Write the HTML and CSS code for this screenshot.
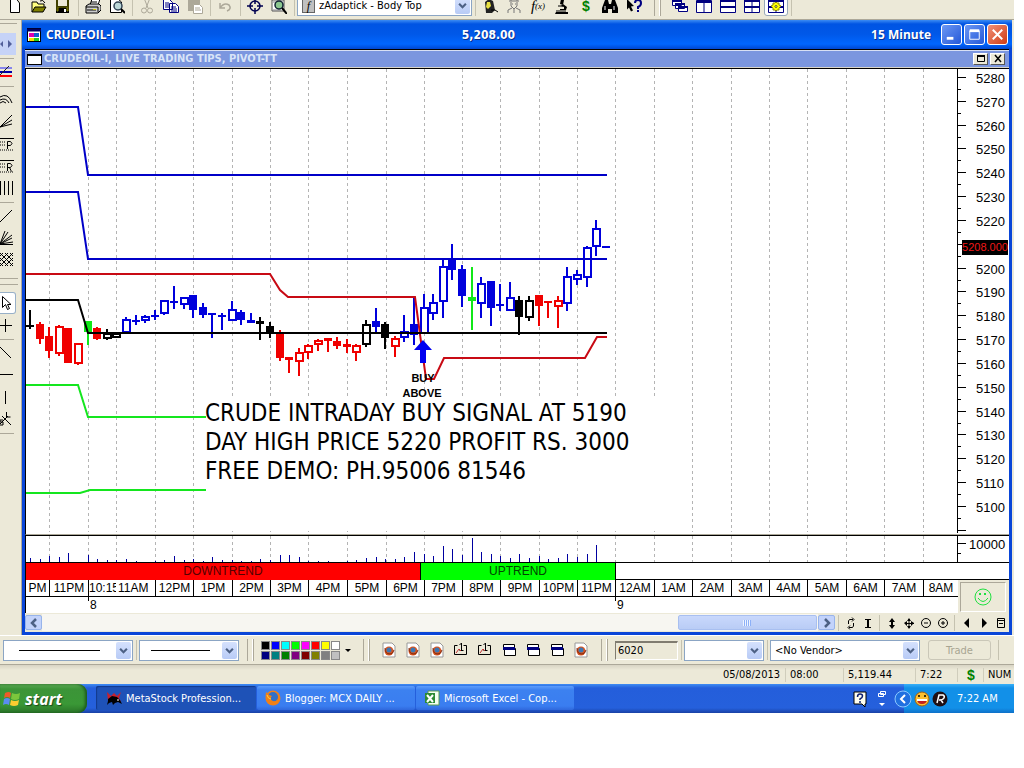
FILE: index.html
```
<!DOCTYPE html>
<html lang="en">
<head>
    <meta charset="UTF-8">
    <meta name="viewport" content="width=device-width, initial-scale=1.0">
    <title>CRUDEOIL-I</title>
    <link rel="stylesheet" href="styles.css">
</head>
<body>
    <!-- Shared icons -->
    <svg class="defs" width="0" height="0" aria-hidden="true">
        <symbol id="down" viewBox="0 0 16 20"><path d="M4 8l4 4 4-4" fill="none" stroke="#4d6185" stroke-width="2.5"/></symbol>
        <symbol id="fox" viewBox="0 0 16 16"><path d="M2 1h9l3 3v11H2z" fill="#fff" stroke="#999"/><circle cx="8" cy="9" r="4.500" fill="#d9541e"/><circle cx="8" cy="8" r="2.500" fill="#3c78b4"/><path d="M4 6q0 6 5 6 3 0 4-4" fill="none" stroke="#7c2b12"/></symbol>
        <symbol id="chartbox" viewBox="0 0 16 16"><path d="M4.500 3.500h-3v9h12v-9h-3M8.500 9V1l-2 2m0 5.500h4" fill="none" stroke="#000"/><path d="M3 11l3-4 2 2" fill="none" stroke="#c03030"/></symbol>
        <symbol id="wins" viewBox="0 0 16 16"><path d="M2.500 2.500h11v4h-11zM3.500 6.500h11v7h-11z" fill="#fff" stroke="#000"/><path d="M2 5h12v3H2z" fill="#000080"/></symbol>
    </svg>

    <div class="app">
        <!-- Main toolbar -->
        <header class="toolbar">
            <button title="New"><svg viewBox="0 0 16 16"><path d="M3.500 1v13.500h9V5l-3-4" fill="#fff" stroke="#000"/></svg></button>
            <button title="Open"><svg viewBox="0 0 16 16"><path d="M1 14V4h5l1 2h6v3" fill="#ffff80" stroke="#000"/><path d="M1 14l3-5h11l-3 5z" fill="#808000" stroke="#000"/><path d="M9 3q3-2 5 2" fill="none" stroke="#000"/></svg></button>
            <button title="Save"><svg viewBox="0 0 16 16"><path d="M1 1h13v14H1z" fill="#000"/><path d="M3 2h9v6H3z" fill="#ece9d8"/><path d="M2 2v11h1V9h9v4h1V2" fill="none" stroke="#808000"/><path d="M9 11h2v3H9z" fill="#fff"/></svg></button>
            <i class="sep"></i>
            <button title="Print"><svg viewBox="0 0 16 16"><path d="M5 7l2-6h8l-2 6" fill="#fff" stroke="#000"/><path d="M1 8l3-2h10l2 2v4l-3 3H1z" fill="#ccc" stroke="#000"/><path d="M1 9h12v5M2 12h9M6 4h6" fill="none" stroke="#000"/><path d="M8 11h3v1H8z" fill="#cc0"/></svg></button>
            <button title="Preview"><svg viewBox="0 0 16 16"><path d="M1.500 1v13.500h11V4L9 1" fill="#fff" stroke="#000"/><circle cx="9" cy="8" r="4" fill="#bcd8d8" stroke="#345" stroke-width="1.500"/><path d="M12 11l4 4" stroke="#000" stroke-width="2"/></svg></button>
            <i class="sep"></i>
            <button title="Cut" disabled><svg viewBox="0 0 16 16" fill="none" stroke="#aca899"><path d="M5 0l4 10M11 0L7 10"/><circle cx="5" cy="12.500" r="2.500"/><circle cx="11" cy="12.500" r="2.500"/></svg></button>
            <button title="Copy"><svg viewBox="0 0 16 16" fill="#fff" stroke="#000080"><path d="M.5 1.500h6l3 3v7h-9zM6.500 5.500h6l3 3v6h-9z"/><path d="M2 5h4M2 7h4M2 9h4M8 9h5M8 11h6M8 13h6"/></svg></button>
            <button title="Paste" disabled><svg viewBox="0 0 16 16"><path d="M1 2h12v11H1z" fill="#aca899"/><path d="M6.500 6.500h6l3 3v6h-9z" fill="#fff" stroke="#aca899"/><path d="M8 10h5M8 12h6" stroke="#aca899"/></svg></button>
            <i class="sep"></i>
            <button title="Undo" disabled><svg viewBox="0 0 16 16" fill="none" stroke="#aca899" stroke-width="1.500"><path d="M3 5v5h5M3 10q4-6 9-3 3 4-2 6"/></svg></button>
            <i class="sep"></i>
            <button title="Crosshair"><svg viewBox="0 0 16 16" fill="none" stroke="#000050" stroke-width="1.500"><circle cx="8" cy="8" r="5"/><path d="M8 0v6M8 10v6M0 8h6M10 8h6"/></svg></button>
            <button title="Find chart"><svg viewBox="0 0 16 16"><path d="M1 2h12v11H1z" fill="#fff" stroke="#555"/><path d="M2 4h10M2 12h8" stroke="#888"/><circle cx="8" cy="7" r="4" fill="#8cc890" stroke="#123" stroke-width="1.500"/><path d="M11 10l5 6" stroke="#000" stroke-width="2"/></svg></button>
            <i class="sep"></i>
            <div class="combo indicator">
                <span class="badge">f</span>
                <select aria-label="Indicator"><option>zAdaptick - Body Top</option></select>
                <svg class="arrow"><use href="#down"/></svg>
            </div>
            <i class="sep"></i>
            <button title="Expert"><svg viewBox="0 0 16 16"><path d="M3 4l4-3 4 2 2 9-3 3H4z" fill="#222"/><path d="M5 4h3l1 4-3 3-2-2z" fill="#e8e040"/><path d="M9 12h4l3 2" stroke="#000" fill="none"/></svg></button>
            <button title="Advisor"><svg viewBox="0 0 16 16" fill="none" stroke="#777"><path d="M3 3h10M5 3V1h6v2M5 4v4l3 3 3-3V4M2 15v-3l4-2M14 15v-3l-4-2M8 11v4M6 6h1M9 6h1"/></svg></button>
            <button title="Function" class="fx">f<sub>(x)</sub></button>
            <button title="Explorer"><svg viewBox="0 0 16 16"><path d="M7 1l3 1-1 5-3-1zM2 14h12v2H1zM9 6l4 3-1 3H6v-1h4V9L7 8z"/><path d="M4 8h5M2 13h10" stroke="#000"/></svg></button>
            <button title="System tester" class="dollar">$</button>
            <button title="Search"><svg viewBox="0 0 16 16"><path d="M3 2h3l1 4h2l1-4h3l3 8v5h-6v-4H6v4H0v-5z"/><path d="M3 8v4M12 8v4" stroke="#fff"/></svg></button>
            <button title="Help"><svg viewBox="0 0 16 16"><path d="M1 1l7 7-3 .5 2 4-2 1-2-4-2 2z"/><path d="M9 5q0-3 3-3t3 3-3 4v2M12 12v2" fill="none" stroke="#000080" stroke-width="2"/></svg></button>
            <i class="grip"></i>
            <button title="Cascade"><svg viewBox="0 0 16 16" fill="#fff" stroke="#000080"><path d="M.5 2.500h9v5h-9zM3.500 5.500h9v5h-9zM6.500 8.500h9v5h-9z"/><path d="M0 3h10M3 6h10M6 9h10" stroke-width="2"/></svg></button>
            <button title="Columns"><svg viewBox="0 0 16 16" fill="#fff" stroke="#000080"><path d="M.5 2.500h15v12H.5zM8 2v12"/><path d="M0 4h16" stroke-width="2"/></svg></button>
            <button title="Rows"><svg viewBox="0 0 16 16" fill="#fff" stroke="#000080"><path d="M.5 2.500h15v12H.5z"/><path d="M0 3h16M0 9h16" stroke-width="2"/></svg></button>
            <button title="Tile"><svg viewBox="0 0 16 16" fill="#fff" stroke="#000080"><path d="M.5 2.500h15v12H.5zM8 2v12"/><path d="M0 3h16M0 9h16" stroke-width="2"/></svg></button>
            <button title="Layout" class="checked"><svg viewBox="0 0 16 16" fill="#fff" stroke="#000080"><path d="M.5 2.500h15v12H.5zM8 2v12"/><path d="M0 3h16M0 9h16" stroke-width="2"/><path d="M8 4l1 1 2 0 0 2 2 1-2 2 0 2-2 0-1 1-1-1-2 0 0-2-2-2 2-1 0-2 2 0z" fill="#ff0" stroke="#880"/><circle cx="8" cy="8.500" r="1" stroke="#550"/></svg></button>
            <i class="sep"></i>
        </header>

        <div class="workspace">
            <!-- Drawing tools -->
            <aside class="tools">
                <button title="Scroll" class="soft"><svg viewBox="0 0 14 16"><path d="M3 5v6L0 8zM8 4l4 4-4 4z" fill="#52609a"/></svg></button>
                <i></i>
                <button title="Regression"><svg viewBox="0 0 14 16"><path d="M0 4h12" stroke="#2020ff"/><path d="M0 8h12" stroke="#00a" stroke-width="2"/><path d="M0 12h12" stroke="red" stroke-width="2"/><path d="M0 11l9-9" stroke="#222"/></svg></button>
                <i></i>
                <button title="Arcs"><svg viewBox="0 0 14 16" fill="none" stroke="#000"><path d="M0 5q8-5 12 6M0 8q6-3 9 3M0 11q3-3 6 0"/></svg></button>
                <button title="Fan"><svg viewBox="0 0 14 16" stroke="#000"><path d="M0 13L12 1M0 13l12-7M0 13l12-3"/></svg></button>
                <button title="Projection"><svg viewBox="0 0 14 16" stroke="#000" fill="none"><path d="M0 2.500h14"/><path d="M0 6h5M0 9h5M0 14h14" stroke-dasharray="1 1"/><path d="M7.500 13V5.500h3q3 2 0 4h-3"/></svg></button>
                <button title="Retracement"><svg viewBox="0 0 14 16" stroke="#000" fill="none"><path d="M0 2.500h14"/><path d="M0 6h5M0 9h5M0 14h14" stroke-dasharray="1 1"/><path d="M7.500 13V5.500h3q3 2 0 4h-3m2 0l2 4"/></svg></button>
                <button title="Time zones"><svg viewBox="0 0 14 16" stroke="#000"><path d="M.5 1v14M4.500 1v14M8.500 1v14M12.500 1v14"/></svg></button>
                <i></i>
                <button title="Gann line"><svg viewBox="0 0 14 16" stroke="#000"><path d="M0 14L12 2"/></svg></button>
                <button title="Gann fan"><svg viewBox="0 0 14 16" stroke="#000"><path d="M0 14L5 1M0 14l8-12M0 14l12-9M0 14l12-6M0 14l13-2M0 14.500h13"/></svg></button>
                <button title="Gann grid"><svg viewBox="0 0 14 16" stroke="#000" fill="none"><path d="M0 1l13 13M0 6l8 8M5 1l8 8M0 11l3 3M10 1l3 3M13 1L0 14M8 1L0 9M13 6l-8 8M3 1L0 4M13 11l-3 3"/></svg></button>
                <i class="wide"></i>
                <button title="Pointer" class="checked"><svg viewBox="0 0 14 16"><path d="M2.500 1.500v11l3-3 2 5 2-1-2-4h3.500z" fill="#fff" stroke="#000"/></svg></button>
                <button title="Cross"><svg viewBox="0 0 14 16" stroke="#000"><path d="M0 8.500h12M5.500 2v13"/></svg></button>
                <i></i>
                <button title="Trendline"><svg viewBox="0 0 14 16" stroke="#000"><path d="M0 2l11 11"/></svg></button>
                <button title="Horizontal line"><svg viewBox="0 0 14 16" stroke="#000"><path d="M0 7.500h13"/></svg></button>
                <button title="Vertical line"><svg viewBox="0 0 14 16" stroke="#000"><path d="M5.500 2v13"/></svg></button>
                <button title="Speed lines"><svg viewBox="0 0 14 16" stroke="#000" fill="none"><path d="M2 5l9 9M0 13L8 5M6.500 1v5h4M3 9H0v2h3v3H0"/></svg></button>
                <i></i>
            </aside>

            <!-- Chart window -->
            <main class="window">
                <div class="titlebar">
                    <svg viewBox="0 0 14 14"><path d="M0 0h14v14H0z" fill="#fff" stroke="#000" stroke-width="2"/><path d="M2 5h5v4H2z" fill="#e000b0"/><path d="M7 5h5v4H7z" fill="#1060d0"/><path d="M2 10h5v3H2z" fill="#f8e000"/><path d="M7 10h5v3H7z" fill="#20d020"/><path d="M0 2h14" stroke="#000060" stroke-width="3"/></svg>
                    <h1>CRUDEOIL-I</h1>
                    <span class="price">5,208.00</span>
                    <span class="period">15 Minute</span>
                    <button title="Minimize"><svg viewBox="0 0 20 20"><path d="M5 14h7" stroke="#fff" stroke-width="3"/></svg></button>
                    <button title="Maximize"><svg viewBox="0 0 20 20"><path d="M5 6h10v9H5z" fill="none" stroke="#fff"/><path d="M5 6h10" stroke="#fff" stroke-width="3"/></svg></button>
                    <button title="Close" class="close"><svg viewBox="0 0 20 20"><path d="M5 5l10 10M15 5L5 15" stroke="#fff" stroke-width="2"/></svg></button>
                </div>
                <div class="subbar">
                    <i></i>
                    <h2>CRUDEOIL-I, LIVE TRADING TIPS, PIVOT-TT</h2>
                    <button title="Maximize pane"><svg viewBox="0 0 12 10"><path d="M2.500 1.500h7v6h-7z" fill="none" stroke="#000"/><path d="M2 2h8" stroke="#000" stroke-width="2"/></svg></button>
                    <button title="Close pane"><svg viewBox="0 0 12 10"><path d="M3 1l6 7M9 1L3 8" stroke="#000" stroke-width="1.500"/></svg></button>
                </div>

                <div class="plot">
                    <svg id="chart" viewBox="26 69 983 465">
                        <g id="grid" class="grid"></g>
                        <rect x="206" y="398" width="470" height="132" fill="#fff"/>
                        <g id="candles"></g>
                        <g class="levels">
                            <path d="M26 107H78L88 175H607M26 192H78L88 259H607" stroke="#0000c8"/>
                            <path d="M26 274H270L280 290L288 297H415L426 379H434L444 358H585L597 337H607" stroke="#c80a14"/>
                            <path d="M26 300H78L88 333H607" stroke="#000"/>
                            <path d="M26 385H78L88 417H206M26 493H80L90 490H206" stroke="#14e61e"/>
                        </g>
                        <path d="M423 340l9 10h-6v13h-6v-13h-6z" fill="#0000f0"/>
                        <text class="signal" x="423" y="382">BUY</text>
                        <text class="signal" x="422" y="397">ABOVE</text>
                        <g id="prices" class="axis"></g>
                        <rect x="962" y="240" width="46" height="15"/>
                        <text class="last" x="985" y="251">5208.000</text>
                    </svg>
                    <p class="note">CRUDE INTRADAY BUY SIGNAL AT 5190<br>DAY HIGH PRICE 5220 PROFIT RS. 3000<br>FREE DEMO: PH.95006 81546</p>
                </div>

                <div class="volume">
                    <svg viewBox="26 536 983 26">
                        <g id="vgrid" class="grid"></g>
                        <g id="volume"></g>
                        <g class="axis">
                            <path d="M957.5 536v26M958 543.5h8M958 553.500h3"/>
                            <text x="969" y="549">10000</text>
                        </g>
                    </svg>
                </div>

                <div class="trend">
                    <span class="downtrend">DOWNTREND</span>
                    <span class="uptrend">UPTREND</span>
                </div>

                <div class="timeline">
                    <div class="times">
                        <div class="hours">
                            <span>PM</span><span>11PM</span><span>10:15</span><span class="joined">11AM</span><span>12PM</span><span>1PM</span><span>2PM</span><span>3PM</span><span>4PM</span><span>5PM</span><span>6PM</span><span>7PM</span><span>8PM</span><span>9PM</span><span>10PM</span><span>11PM</span><span>12AM</span><span>1AM</span><span>2AM</span><span>3AM</span><span>4AM</span><span>5AM</span><span>6AM</span><span>7AM</span><span>8AM</span>
                        </div>
                        <div class="days"><span></span><span>8</span><span>9</span></div>
                    </div>
                    <div class="mood">
                        <svg viewBox="0 0 20 20" fill="none" stroke="#20e040"><circle cx="10" cy="10" r="8"/><path d="M5 11q5 7 10 0"/><path d="M7 6v2M12 6v2" stroke-width="2"/></svg>
                    </div>
                </div>

                <div class="scroll">
                    <button title="Scroll left" class="xp"><svg viewBox="0 0 16 16"><path d="M10 4L6 8l4 4" fill="none" stroke="#4d6185" stroke-width="2.500"/></svg></button>
                    <div class="track"><div class="thumb"><i></i></div></div>
                    <button title="Scroll right" class="xp"><svg viewBox="0 0 16 16"><path d="M6 4l4 4-4 4" fill="none" stroke="#4d6185" stroke-width="2.500"/></svg></button>
                    <i class="line"></i>
                    <button title="Refresh"><svg viewBox="0 0 16 16" fill="none" stroke="#000"><path d="M10 4.500H6.500L5.500 6v3M6 12.500h3.500l1-1.500V8M9 2.500l2 2-2 2M7 10.500l-2 2 2 2"/></svg></button>
                    <button title="Bar width"><svg viewBox="0 0 16 16" stroke="#000"><path d="M5 4.500h6M5 12.500h6"/><path d="M8 4v9" stroke-width="2"/></svg></button>
                    <i class="line"></i>
                    <button title="Rescale"><svg viewBox="0 0 16 16"><path d="M8 3l3 4H9v3h2l-3 4-3-4h2V7H5z"/></svg></button>
                    <button title="Move"><svg viewBox="0 0 16 16"><path d="M8 3l2 3H6zM8 14l2-3H6zM3 8l3-2v5zM13 8l-3-2v5z"/><path d="M8 4v9M4 8.500h9" stroke="#000"/></svg></button>
                    <button title="Zoom out"><svg viewBox="0 0 16 16" fill="none" stroke="#000"><circle cx="8" cy="8" r="4.500"/><path d="M6 8h4"/></svg></button>
                    <button title="Zoom in"><svg viewBox="0 0 16 16" fill="none" stroke="#000"><circle cx="8" cy="8" r="4.500"/><path d="M6 8h4M8 6v4"/></svg></button>
                    <i class="line"></i>
                    <button title="Previous"><svg viewBox="0 0 16 16"><path d="M10 3v10L5 8z"/></svg></button>
                    <button title="Next"><svg viewBox="0 0 16 16"><path d="M6 3v10l5-5z"/></svg></button>
                    <button title="Properties"><svg viewBox="0 0 16 16" fill="none" stroke="#000"><path d="M4.500 3.500h7v9h-7zM4 5.500h8M6 8.500h4"/></svg></button>
                </div>
            </main>
        </div>

        <!-- Format bar -->
        <div class="formatbar">
            <div class="combo linestyle"><select aria-label="Line style"><option></option></select><hr><svg class="arrow"><use href="#down"/></svg></div>
            <i class="sep"></i>
            <div class="combo lineweight"><select aria-label="Line weight"><option></option></select><hr><svg class="arrow"><use href="#down"/></svg></div>
            <i class="grip"></i>
            <div class="palette" id="palette"></div>
            <button title="More colors" class="more"><svg viewBox="0 0 8 8"><path d="M1 3h6L4 6z"/></svg></button>
            <i class="grip"></i>
            <div class="links">
                <button title="Link 1"><svg><use href="#fox"/></svg></button>
                <button title="Link 2"><svg><use href="#fox"/></svg></button>
                <button title="Link 3"><svg><use href="#fox"/></svg></button>
                <button title="Chart 1"><svg><use href="#chartbox"/></svg></button>
                <button title="Chart 2"><svg><use href="#chartbox"/></svg></button>
                <button title="Window 1"><svg><use href="#wins"/></svg></button>
                <button title="Window 2"><svg><use href="#wins"/></svg></button>
                <button title="Window 3"><svg><use href="#wins"/></svg></button>
                <button title="Link 4"><svg><use href="#fox"/></svg></button>
            </div>
            <i class="grip"></i>
            <input class="code" type="text" value="6020" aria-label="Code">
            <i class="sep"></i>
            <div class="combo account"><select aria-label="Account"><option></option></select><svg class="arrow"><use href="#down"/></svg></div>
            <i class="sep"></i>
            <div class="combo vendor"><select aria-label="Vendor"><option>&lt;No Vendor&gt;</option></select><svg class="arrow"><use href="#down"/></svg></div>
            <button class="trade" disabled>Trade</button>
            <i class="sep"></i>
        </div>

        <!-- Status bar -->
        <div class="statusbar">
            <span class="date">05/08/2013</span>
            <span class="open">08:00</span>
            <span class="value">5,119.44</span>
            <span class="clock">7:22</span>
            <span class="dollar">$</span>
            <span class="num">NUM</span>
        </div>

        <!-- Taskbar -->
        <footer class="taskbar">
            <button class="start">
                <svg viewBox="0 0 18 18"><path d="M2 3q4-2 6 0L7 8Q4 6 1 8z" fill="#f05a28"/><path d="M9 3q4 2 8 0l-1 6q-4 2-8 0z" fill="#7cc63c"/><path d="M1 9q3-2 6 0l-1 6q-3-2-6 0z" fill="#5a8cf0"/><path d="M8 10q4 2 8 0l-1 5q-4 2-8 0z" fill="#fccc30"/></svg>
                start
            </button>
            <button class="task active">
                <svg viewBox="0 0 16 16"><path d="M1 2l4 4 3-3 3 3 4-4-2 6 2 4-5-2-4 2-4-1z" fill="#c8202c"/><path d="M2 9l4-3 5 1 3 3 2 4-4-2-3 1-2 2-1-3-3 1-2 2 1-4z"/><path d="M11 10h2" stroke="#fff"/></svg>
                <span>MetaStock Profession...</span>
            </button>
            <button class="task">
                <svg viewBox="0 0 16 16"><circle cx="8" cy="8" r="7.500" fill="#f08018"/><circle cx="8" cy="7" r="5" fill="#3070c8"/><path d="M1 2q-2 13 7 13 6 0 7-8-3 5-7 4-4-2-1-5Q3 5 1 2z" fill="#f08018"/><path d="M2 5q1 4 4 4" stroke="#ffd040" fill="none"/></svg>
                <span>Blogger: MCX DAILY ...</span>
            </button>
            <button class="task">
                <svg viewBox="0 0 16 16"><path d="M4 1h11v14H4z" fill="#f4fff0" stroke="#5a9a50"/><path d="M1 3h10v10H1z" fill="#2c8a34"/><path d="M3 5l6 7M9 5l-6 7" stroke="#fff" stroke-width="2"/></svg>
                <span>Microsoft Excel - Cop...</span>
            </button>
            <div class="notify">
                <svg viewBox="0 0 16 16"><path d="M2 1h12v12h-1v3l-3-3H2z" fill="#fffff0" stroke="#000"/><path d="M5.500 6q0-3 2.500-3t2.500 2-2.500 3v1M8 10v2" fill="none" stroke="#102070" stroke-width="1.500"/></svg>
                <svg class="restore" viewBox="0 0 12 18"><path d="M4.500 1.500h5v3h-5zM2.500 3.500h5v3h-5z" fill="none" stroke="#fff"/><path d="M3 13h6l-3 3z" fill="#fff"/></svg>
            </div>
            <div class="tray">
                <button title="Hide icons"><svg viewBox="0 0 18 18"><circle cx="9" cy="9" r="8" fill="#2070e0" stroke="#8cc8ff"/><path d="M11 5L7 9l4 4" fill="none" stroke="#fff" stroke-width="2"/></svg></button>
                <svg viewBox="0 0 16 16"><circle cx="8" cy="8" r="7" fill="#fcc030" stroke="#a06010"/><path d="M3 8h10q0 5-5 5T3 8z" fill="#c02020"/><path d="M3 8h10v2H3z" fill="#fff"/><path d="M5 4v2M11 4v2" stroke="#000" stroke-width="1.500"/></svg>
                <svg viewBox="0 0 16 16"><circle cx="8" cy="8" r="7.500" fill="#201014"/><path d="M5 12L7 4h4q2 1 1 3-1 2-5 2M9 9l2 3" fill="none" stroke="#fff" stroke-width="1.500"/></svg>
                <time>7:22 AM</time>
            </div>
        </footer>
    </div>

    <script>
        const BLUE = '#0000dc', RED = '#f00000', BLACK = '#000', GREEN = '#10e818';

        // x, high, low, body top, body bottom, color, 1 = hollow
        const candles = [
            [30, 310, 329, 325, 327, BLACK, 0], [40, 322, 344, 324, 339, RED, 0], [49, 327, 358, 336, 351, RED, 0],
            [59, 325, 356, 327, 353, RED, 1], [68, 328, 363, 328, 363, RED, 0], [78, 343, 365, 344, 363, RED, 1],
            [88, 321, 345, 321, 332, GREEN, 0], [97, 327, 340, 328, 339, RED, 0], [107, 329, 340, 334, 338, BLACK, 1],
            [116, 333, 338, 334, 337, BLACK, 1], [126, 317, 333, 320, 332, BLUE, 1], [136, 315, 325, 320, 322, BLUE, 0],
            [145, 315, 323, 317, 320, BLUE, 1], [155, 310, 320, 315, 317, BLUE, 0], [164, 300, 315, 301, 313, BLUE, 1],
            [174, 286, 309, 301, 303, BLUE, 0], [184, 297, 309, 298, 304, BLUE, 1], [193, 295, 318, 295, 310, BLUE, 0],
            [203, 303, 318, 307, 315, BLUE, 0], [212, 313, 338, 313, 315, BLUE, 0], [222, 313, 330, 315, 317, BLUE, 0],
            [232, 301, 321, 310, 320, BLUE, 1], [241, 310, 325, 312, 320, BLUE, 0], [251, 313, 323, 320, 323, BLUE, 0],
            [260, 317, 340, 321, 324, BLACK, 0], [270, 322, 338, 326, 333, BLACK, 0], [280, 330, 361, 332, 358, RED, 0],
            [289, 357, 373, 357, 360, RED, 0], [299, 348, 376, 353, 361, RED, 1], [308, 344, 359, 346, 352, RED, 1],
            [318, 339, 351, 341, 344, RED, 1], [328, 338, 352, 338, 341, RED, 0], [337, 337, 349, 341, 346, RED, 0],
            [347, 339, 353, 344, 347, RED, 0], [356, 344, 361, 346, 352, RED, 1], [366, 320, 347, 325, 344, BLACK, 1],
            [376, 308, 334, 321, 327, BLUE, 0], [385, 322, 349, 324, 338, BLACK, 0], [395, 336, 357, 339, 346, RED, 1],
            [404, 315, 342, 332, 337, BLUE, 1], [414, 297, 345, 324, 335, BLUE, 0], [424, 294, 334, 308, 333, BLUE, 1],
            [433, 294, 320, 303, 313, BLUE, 1], [443, 259, 318, 267, 301, BLUE, 1], [452, 244, 280, 258, 270, BLUE, 0],
            [462, 265, 307, 269, 296, BLUE, 0], [472, 267, 330, 297, 301, GREEN, 0], [481, 277, 318, 284, 303, BLUE, 1],
            [491, 281, 326, 281, 308, BLUE, 0], [500, 284, 311, 304, 306, BLUE, 0], [510, 282, 311, 298, 310, BLUE, 1],
            [519, 296, 335, 300, 317, BLACK, 0], [529, 296, 321, 301, 317, BLACK, 1], [539, 295, 326, 295, 306, RED, 0],
            [548, 301, 318, 301, 303, RED, 0], [558, 296, 328, 301, 306, RED, 1], [567, 267, 311, 277, 303, BLUE, 1],
            [577, 270, 285, 275, 279, BLUE, 1], [587, 246, 287, 248, 277, BLUE, 1], [596, 220, 256, 229, 246, BLUE, 1],
            [606, 246, 248, 246, 248, BLUE, 0]
        ];

        // Bar heights, one per candle
        const volumes = [4, 3, 6, 5, 9, 0, 7, 3, 2, 2, 3, 1, 0, 1, 2, 6, 2, 3, 1, 5, 2, 2, 1, 1, 3, 2, 7, 7, 5, 1, 1, 1, 0, 1, 2, 4, 5, 3, 3, 5, 10, 8, 6, 16, 13, 7, 24, 10, 8, 6, 4, 8, 4, 6, 3, 4, 8, 5, 8, 17, 0];

        const hours = [49, 88, 116, 155, 193, 232, 270, 308, 347, 386, 424, 462, 500, 539, 577, 615, 654, 692, 731, 769, 807, 846, 884, 923];

        function gridLines(top, bottom) {
            return hours.map(x => `<path d="M${x + 0.5} ${top}V${bottom}"/>`).join('');
        }
        document.getElementById('grid').innerHTML = gridLines(69, 532);
        document.getElementById('vgrid').innerHTML = gridLines(536, 562);

        document.getElementById('candles').innerHTML = candles.map(([x, high, low, top, bottom, color, hollow]) => {
            const wick = `<path d="M${x} ${high}V${low}" stroke="${color}" stroke-width="2"/>`;
            const body = hollow
                ? `<rect x="${x - 3}" y="${top}" width="7" height="${bottom - top}" fill="#fff" stroke="${color}" stroke-width="2"/>`
                : `<rect x="${x - 4}" y="${top}" width="8" height="${bottom - top}" fill="${color}"/>`;
            return wick + body;
        }).join('');

        document.getElementById('volume').innerHTML = candles.map((c, i) =>
            `<rect x="${c[0]}" y="${562 - volumes[i]}" width="1" height="${volumes[i]}" fill="#0000a0"/>`).join('');

        // Price axis, the last price tag takes the place of the 5210 label
        let axis = '<path d="M957.5 69V533"/>';
        for (let price = 5280; price >= 5090; price -= 5) {
            const y = Math.round(77 + (5280 - price) * 2.383) + 0.5;
            const major = price % 10 === 0;
            axis += `<path d="M958 ${y}h${major ? 8 : 3}"/>`;
            if (major && price > 5090 && price !== 5210) {
                axis += `<text x="976" y="${y + 5}">${price}</text>`;
            }
        }
        document.getElementById('prices').innerHTML = axis;

        // Color palette
        const colors = ['#000', '#00f', '#0ff', '#0f0', '#f0f', '#f00', '#ff0', '#fff', '#000080', '#008080', '#008000', '#800080', '#800000', '#808000', '#808080', '#c0c0c0'];
        document.getElementById('palette').innerHTML = colors.map(c =>
            `<button title="${c}" style="background:${c}"></button>`).join('');
    </script>
</body>
</html>
```
FILE: styles.css
```
* {
    box-sizing: border-box;
}

body {
    margin: 0;
    background: #fff;
    color: #000;
    font-family: "DejaVu Sans Condensed", "DejaVu Sans", sans-serif;
    font-size: 11px;
}

button, select, input {
    font: inherit;
    color: inherit;
    margin: 0;
    padding: 0;
}

button {
    display: flex;
    align-items: center;
    justify-content: center;
    flex: none;
    background: none;
    border: 0;
}

svg {
    display: block;
    flex: none;
}

.defs {
    position: absolute;
}

.app {
    margin-right: 10px;
    background: #ece9d8;
}

/* Main toolbar */
.toolbar {
    display: flex;
    align-items: flex-end;
    height: 19px;
    padding: 0 0 3px 3px;
    overflow: hidden;
}

.toolbar button {
    width: 24px;
    height: 20px;
}

.toolbar button svg {
    width: 16px;
    height: 16px;
}

.toolbar .checked {
    background: #fff;
    border: 1px solid #98a8b8;
    border-radius: 3px;
}

.sep {
    flex: none;
    width: 6px;
    height: 20px;
    background: linear-gradient(#c5c2b0, #c5c2b0) center / 1px 100% no-repeat;
}

.grip {
    flex: none;
    width: 22px;
    height: 22px;
    background: linear-gradient(90deg, #aca899 1px, #ece9d8 1px, #ece9d8 5px, #fff 5px, #fff 6px, #aca899 6px) center / 7px 100% no-repeat;
}

.dollar {
    color: #008000;
    font-family: "Liberation Sans", sans-serif;
    font-size: 14px;
    font-weight: bold;
}

.fx {
    font-family: "Liberation Serif", serif;
    font-size: 15px;
    font-style: italic;
}

.fx sub {
    font-size: 9px;
}

/* Drop-downs */
.combo {
    position: relative;
    display: flex;
    align-items: center;
    flex: none;
    height: 21px;
    background: #fff;
    border: 1px solid #8ba5c4;
}

.combo select {
    flex: 1;
    width: 100%;
    height: 100%;
    padding-left: 4px;
    appearance: none;
    background: none;
    border: 0;
}

.combo .arrow {
    position: absolute;
    top: 1px;
    right: 1px;
    width: 15px;
    height: 17px;
    background: linear-gradient(#d5e1fd, #b8cbf6);
    border-radius: 2px;
    pointer-events: none;
}

.combo hr {
    position: absolute;
    left: 15px;
    right: 32px;
    margin: 0;
    border: 0;
    border-top: 1px solid #000;
    pointer-events: none;
}

.indicator {
    width: 175px;
}

.badge {
    width: 13px;
    height: 14px;
    margin-left: 4px;
    background: #c0c0c0;
    border: 1px solid #666;
    font: italic 12px/12px "Liberation Serif", serif;
    text-align: center;
}

/* Drawing tools */
.workspace {
    display: flex;
    border-top: 1px solid #aca899;
    padding-right: 2px;
}

.tools {
    display: flex;
    flex-direction: column;
    flex: none;
    width: 22px;
    padding-top: 13px;
    background: linear-gradient(#aca899, #aca899) 0 3px / 17px 1px no-repeat;
    border-right: 1px solid #aca899;
}

.tools button {
    width: 16px;
    height: 22px;
    justify-content: flex-start;
}

.tools button svg {
    width: 14px;
    height: 16px;
}

.tools .soft {
    background: #c6d3f7;
}

.tools .checked {
    background: #fff;
    border: 1px solid #98b0c8;
    border-left: 0;
    border-radius: 0 3px 3px 0;
}

.tools i {
    height: 6px;
    width: 14px;
    background: linear-gradient(#aca899, #aca899) center / 100% 1px no-repeat;
}

.tools .wide {
    height: 21px;
    width: 18px;
    background: linear-gradient(#aca899 1px, #ece9d8 1px, #ece9d8 6px, #aca899 6px) center / 100% 7px no-repeat;
}

/* Chart window */
.window {
    flex: 1;
    min-width: 0;
    background: #fff;
    border: 3px solid #0a46d8;
    border-top: 0;
}

.titlebar {
    display: flex;
    align-items: center;
    gap: 2px;
    height: 29px;
    margin: 0 -3px;
    padding: 0 4px 0 5px;
    background: linear-gradient(#3c8cf4, #0054e3 4px, #0058e8 14px, #0066ff 24px, #0046d0);
    color: #fff;
    font-family: "Open Sans", sans-serif;
    font-size: 12px;
    font-weight: bold;
    text-shadow: 1px 1px #0a3090;
}

.titlebar > svg {
    width: 14px;
    height: 14px;
}

.titlebar h1 {
    flex: 1;
    margin: 0 0 0 3px;
    font-size: 12px;
}

.titlebar .price {
    flex: none;
    font-family: "DejaVu Sans Condensed", sans-serif;
    font-size: 12px;
}

.titlebar .period {
    flex: 1;
    margin-right: 8px;
    text-align: right;
}

.titlebar button {
    width: 21px;
    height: 21px;
    background: linear-gradient(135deg, #6c98f4, #2458d8);
    border: 1px solid #fff;
    border-radius: 3px;
}

.titlebar .close {
    background: linear-gradient(135deg, #f09078, #d03c14);
}

.titlebar button svg {
    width: 19px;
    height: 19px;
}

.subbar {
    display: flex;
    align-items: center;
    gap: 2px;
    height: 20px;
    padding: 0 4px 0 2px;
    background: #7b96df;
    border-top: 1px solid #000;
    border-bottom: 1px solid #000;
    box-shadow: inset 0 1px #d8e0f4, inset 0 -1px #d8d4c8;
    color: #d8e4f8;
}

.subbar i {
    width: 15px;
    height: 11px;
    background: #fff;
    border: 1px solid #000;
    border-top-width: 2px;
}

.subbar h2 {
    flex: 1;
    margin: 0;
    font-size: 11px;
    line-height: 16px;
}

.subbar button {
    width: 15px;
    height: 12px;
    background: #ece9d8;
    border: 1px solid;
    border-color: #fff #555 #555 #fff;
}

.subbar button svg {
    width: 12px;
    height: 10px;
}

.plot {
    position: relative;
    border-left: 1px solid #000;
    border-bottom: 1px solid #aca899;
}

.plot svg, .volume svg {
    width: 100%;
    height: auto;
}

.grid {
    stroke: #b4b4b4;
    stroke-dasharray: 3 3;
}

.levels {
    fill: none;
    stroke-width: 2;
}

.signal {
    font: bold 11px "Liberation Sans", sans-serif;
    text-anchor: middle;
}

.axis path {
    stroke: #000;
}

.axis text {
    font: 13px "Liberation Sans", sans-serif;
}

.last {
    fill: #f01818;
    font: 11px "Liberation Sans", sans-serif;
    text-anchor: middle;
}

/* Signal message over the chart */
.note {
    position: absolute;
    left: 18%;
    top: 71%;
    margin: 0;
    padding-left: 2px;
    font-size: 24px;
    line-height: 29px;
    white-space: nowrap;
}

.volume {
    border-top: 1px solid #000;
    border-bottom: 1px solid #000;
    border-left: 1px solid #000;
}

.trend {
    display: grid;
    grid-template-columns: 395fr 196fr 393fr;
    height: 17px;
    border-bottom: 1px solid #000;
    font: 12px/17px "Liberation Sans", sans-serif;
    text-align: center;
}

.downtrend {
    background: #f00;
    border-left: 1px solid #000;
    color: #500;
}

.uptrend {
    background: #0f0;
    border: solid #000;
    border-width: 0 1px;
    color: #040;
}

.timeline {
    display: flex;
    background: #ece9d8;
}

.times {
    flex: 1;
    min-width: 0;
    background: #fff;
    font: 12px/17px "Liberation Sans", sans-serif;
}

.hours {
    display: grid;
    grid-template-columns:
        minmax(0, 24fr) minmax(0, 39fr) minmax(0, 28fr) minmax(0, 39fr) minmax(0, 38fr)
        minmax(0, 39fr) minmax(0, 38fr) minmax(0, 38fr) minmax(0, 39fr) minmax(0, 39fr)
        minmax(0, 38fr) minmax(0, 38fr) minmax(0, 38fr) minmax(0, 39fr) minmax(0, 38fr)
        minmax(0, 38fr) minmax(0, 39fr) minmax(0, 38fr) minmax(0, 39fr) minmax(0, 38fr)
        minmax(0, 38fr) minmax(0, 39fr) minmax(0, 38fr) minmax(0, 39fr) minmax(0, 35fr);
    height: 17px;
    border-bottom: 1px solid #000;
    text-align: center;
}

.hours span {
    overflow: hidden;
    border-left: 1px solid #000;
}

.hours .joined {
    padding-left: 2px;
    border-left: 0;
    text-align: left;
}

.days {
    display: grid;
    grid-template-columns: 63fr 527fr 343fr;
    height: 16px;
    line-height: 16px;
}

.days span {
    padding-left: 2px;
    background: linear-gradient(#000, #000) 0 0 / 1px 4px no-repeat;
}

.days span:first-child {
    background-size: 1px 100%;
}

.mood {
    display: flex;
    align-items: center;
    justify-content: center;
    width: 46px;
    margin: 2px 3px 1px 2px;
    border: 1px solid;
    border-color: #aca899 #fff #fff #aca899;
}

.mood svg {
    width: 20px;
    height: 20px;
}

.scroll {
    display: flex;
    align-items: center;
    height: 19px;
    background: #ece9d8;
}

.scroll button {
    width: 17px;
    height: 16px;
}

.scroll button svg {
    width: 16px;
    height: 16px;
}

.scroll .xp {
    height: 15px;
    background: #c3d3fb;
    border: 1px solid #98b4ea;
    border-radius: 2px;
}

.track {
    display: flex;
    justify-content: flex-end;
    flex: 1;
    height: 17px;
    padding: 1px 1px 1px 0;
    background: #f7f6f1;
}

.thumb {
    display: flex;
    align-items: center;
    justify-content: center;
    width: 18%;
    background: linear-gradient(#c9d8fc, #b9ccf5);
    border: 1px solid #a8bff0;
    border-radius: 2px;
}

.thumb i {
    width: 8px;
    height: 6px;
    background: repeating-linear-gradient(90deg, #eef4fe 0, #eef4fe 1px, #8cb0f8 1px, #8cb0f8 2px);
}

.line {
    width: 1px;
    height: 16px;
    margin: 0 3px;
    background: #c5c2b0;
}

/* Format bar */
.formatbar {
    display: flex;
    align-items: center;
    height: 30px;
    padding-left: 3px;
    border-top: 1px solid #fff;
    border-bottom: 1px solid #aca899;
}

.linestyle {
    width: 130px;
}

.lineweight {
    width: 100px;
}

.lineweight hr {
    left: 11px;
    right: 28px;
}

.palette {
    display: grid;
    grid-template-columns: repeat(8, 10px);
    gap: 1px 0;
}

.palette button {
    width: 9px;
    height: 9px;
    border: 1px solid #888;
}

.more {
    width: 14px;
}

.more svg {
    width: 8px;
    height: 8px;
}

.links {
    display: flex;
}

.links button {
    width: 24px;
    height: 20px;
}

.links svg {
    width: 16px;
    height: 16px;
}

.code {
    width: 63px;
    height: 19px;
    background: #ece9d8;
    border: 1px solid;
    border-top-width: 2px;
    border-color: #807c70 #fff #fff #807c70;
    padding-left: 2px;
}

.account {
    width: 80px;
}

.vendor {
    width: 150px;
}

.trade {
    width: 63px;
    height: 20px;
    margin: 0 4px 0 8px;
    border: 1px solid #cac7b8;
    border-radius: 3px;
    color: #a8a592;
}

/* Status bar */
.statusbar {
    display: flex;
    align-items: center;
    justify-content: flex-end;
    height: 19px;
    background: linear-gradient(#d8d4c4, #ece9d8 5px);
    line-height: 14px;
}

.statusbar span {
    padding-left: 4px;
    border-left: 1px solid #d0cdbc;
}

.statusbar .date {
    width: 66px;
    border: 0;
}

.statusbar .open {
    width: 58px;
}

.statusbar .value {
    width: 72px;
}

.statusbar .clock {
    width: 42px;
}

.statusbar .dollar {
    width: 26px;
    padding-left: 9px;
}

.statusbar .num {
    width: 31px;
}

/* Taskbar */
.taskbar {
    display: flex;
    height: 29px;
    background: linear-gradient(#3f8cf3, #245edb 4px, #2560dc 24px, #1941a5);
    color: #fff;
}

.start {
    gap: 4px;
    width: 87px;
    margin-right: 9px;
    padding-right: 22px;
    background: linear-gradient(#5eac56, #3c9438 5px, #3a9836 20px, #2a7428);
    border-radius: 0 9px 9px 0;
    box-shadow: inset -2px 0 3px #1c5a1c;
    font: italic bold 16px "Open Sans", sans-serif;
    text-shadow: 1px 1px 1px #1a4a1a;
}

.start svg {
    width: 18px;
    height: 18px;
}

.task {
    justify-content: flex-start;
    gap: 4px;
    width: 158px;
    height: 24px;
    margin: 2px 1px 0 0;
    padding-left: 8px;
    background: linear-gradient(#5c9cfc, #3c81f0 4px, #3a7df0 20px, #3068dc);
    border-radius: 2px;
    white-space: nowrap;
}

.task svg {
    width: 16px;
    height: 16px;
}

.task.active {
    width: 160px;
    padding-left: 10px;
    background: #1e52b7;
    box-shadow: inset 1px 1px 1px #123a8c;
}

.notify {
    display: flex;
    align-items: center;
    gap: 8px;
    margin-left: auto;
    padding-right: 16px;
}

.notify svg {
    width: 16px;
    height: 16px;
}

.notify .restore {
    width: 12px;
    height: 18px;
}

.tray {
    display: flex;
    align-items: center;
    gap: 2px;
    width: 110px;
    background: linear-gradient(#38b0f8, #1290e8 4px, #1290e8 24px, #0e70c8);
}

.tray button {
    margin-left: -10px;
}

.tray button svg {
    width: 18px;
    height: 18px;
}

.tray svg {
    width: 16px;
    height: 16px;
}

.tray time {
    margin-left: 7px;
}
```
